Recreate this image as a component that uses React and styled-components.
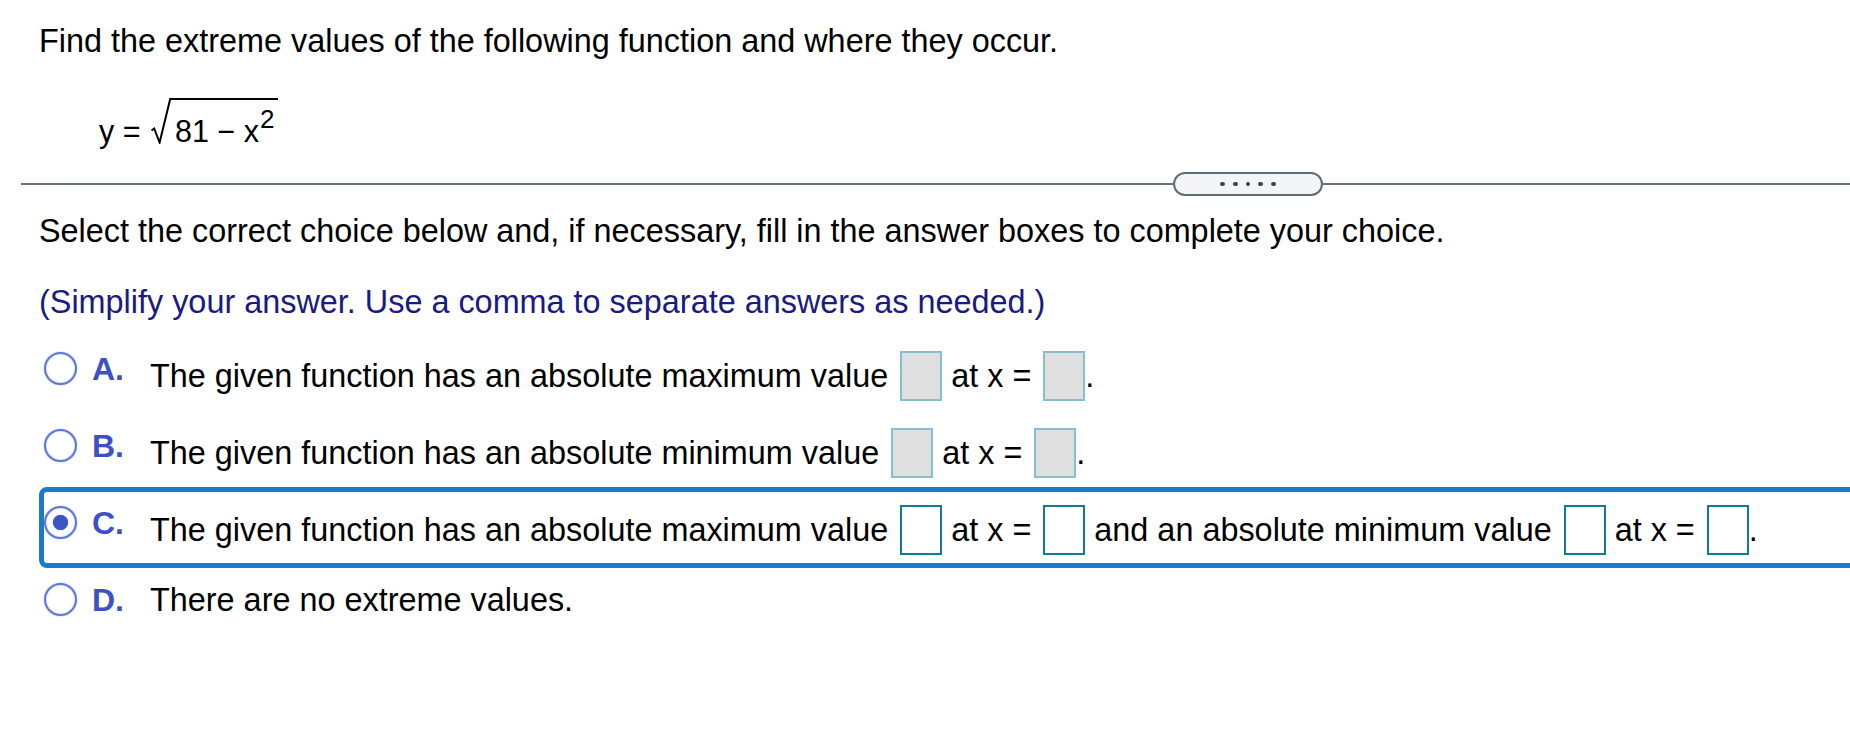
import React from 'react';
import styled, { createGlobalStyle } from 'styled-components';

const options = [
  {
    letter: 'A',
    parts: ['The given function has an absolute maximum value', 'box', 'at x =', 'box', '.'],
  },
  {
    letter: 'B',
    parts: ['The given function has an absolute minimum value', 'box', 'at x =', 'box', '.'],
  },
  {
    letter: 'C',
    selected: true,
    parts: [
      'The given function has an absolute maximum value', 'box', 'at x =', 'box',
      'and an absolute minimum value', 'box', 'at x =', 'box', '.',
    ],
  },
  {
    letter: 'D',
    parts: ['There are no extreme values.'],
  },
];

const renderParts = (parts, active) =>
  parts.map((part, i) => {
    if (part === 'box') return <AnswerBox key={i} $active={active} />;
    // a space goes before text that follows a box, except the closing period
    const lead = i > 0 && part !== '.' ? ' ' : '';
    const trail = parts[i + 1] === 'box' ? ' ' : '';
    return <React.Fragment key={i}>{lead + part + trail}</React.Fragment>;
  });

const App = () => {
  return (
    <>
      <GlobalStyle />
      <Page>
        <Prompt>Find the extreme values of the following function and where they occur.</Prompt>

        <Equation>
          y = <RadicalSign viewBox="0 0 22 46" width="22" height="46">
            <path d="M2.5 32.5 L5.2 30.5 L10.6 44.5 L21.2 1 L22 1" fill="none" stroke="#000" strokeWidth="2" strokeLinejoin="miter" />
          </RadicalSign>
          <Radicand>
            81 − x<Sup>2</Sup>
          </Radicand>
        </Equation>

        <Separator>
          <Rule $width="1152px" />
          <Pill>
            {[0, 1, 2, 3, 4].map(i => <PillDot key={i} />)}
          </Pill>
          <Rule />
        </Separator>

        <Instruction>
          Select the correct choice below and, if necessary, fill in the answer boxes to complete your choice.
        </Instruction>
        <Hint>(Simplify your answer. Use a comma to separate answers as needed.)</Hint>

        <Options>
          {options.map(opt => (
            <Option key={opt.letter} $selected={opt.selected}>
              <Radio>{opt.selected && <RadioDot />}</Radio>
              <Letter>{opt.letter}.</Letter>
              <Content>{renderParts(opt.parts, opt.selected)}</Content>
            </Option>
          ))}
        </Options>
      </Page>
    </>
  );
};

export default App;

const GlobalStyle = createGlobalStyle`
  html, body {
    margin: 0;
    padding: 0;
    background: #fff;
    overflow: hidden;
  }

  body {
    font-family: "Liberation Sans", Arial, sans-serif;
    color: #000;
  }
`;

const Page = styled.div`
  padding: 23px 0 0 39px;
  font-size: 32.4px;
  line-height: 36px;
`;

const Prompt = styled.p`
  margin: 0;
`;

const Equation = styled.div`
  margin: 39px 0 0 60px;
  font-size: 30.5px;
  line-height: normal;
  white-space: nowrap;
`;

const RadicalSign = styled.svg`
  display: inline-block;
  vertical-align: -2px;
`;

const Radicand = styled.span`
  display: inline-block;
  border-top: 2px solid #000;
  padding: 14px 4px 0 4px;
  line-height: normal;
`;

const Sup = styled.span`
  font-size: 26px;
  line-height: 0;
  vertical-align: 14px;
  margin-left: 1px;
`;

const Separator = styled.div`
  display: flex;
  align-items: center;
  margin: 23px 0 0 -18px;
  width: calc(100% + 18px);
  height: 24px;
`;

const Rule = styled.div`
  height: 2px;
  background: #66727f;
  flex: ${({ $width }) => ($width ? `0 0 ${$width}` : '1')};
`;

const Pill = styled.div`
  flex: none;
  box-sizing: border-box;
  width: 150px;
  height: 24px;
  border: 2px solid #5e6b79;
  border-radius: 12px;
  background: #f3f4f6;
  display: flex;
  align-items: center;
  justify-content: center;
  gap: 8.2px;
`;

const PillDot = styled.span`
  width: 4.5px;
  height: 4.5px;
  border-radius: 50%;
  background: #3f4449;
`;

const Instruction = styled.p`
  margin: 17px 0 0;
`;

const Hint = styled.p`
  margin: 35px 0 0;
  color: #1a1a82;
`;

const Options = styled.div`
  display: flex;
  flex-direction: column;
  gap: 6px;
  margin: 18px 0 0 5px;
`;

const Option = styled.div`
  display: flex;
  align-items: flex-start;
  width: 1880px;
  padding: 13px 0 8px;
  border-radius: 3px;
  outline: ${({ $selected }) => ($selected ? '5px solid #1a7cc9' : 'none')};
`;

const Radio = styled.span`
  flex: none;
  box-sizing: border-box;
  width: 33px;
  height: 33px;
  margin-top: 1px;
  border-radius: 50%;
  border: 2.5px solid #5f78d6;
  box-shadow: 0 0 1.5px rgba(95, 120, 214, 0.7), inset 0 0 1.5px rgba(95, 120, 214, 0.7);
  display: flex;
  align-items: center;
  justify-content: center;
`;

const RadioDot = styled.span`
  width: 15px;
  height: 15px;
  border-radius: 50%;
  background: #3b55c8;
  box-shadow: 0 0 1px #3b55c8;
`;

const Letter = styled.span`
  flex: none;
  width: 58px;
  margin-left: 15px;
  font-size: 32px;
  font-weight: bold;
  line-height: 36px;
  color: #3d51c4;
`;

const Content = styled.span`
  font-size: 32.4px;
  line-height: 36px;
  white-space: nowrap;
`;

const AnswerBox = styled.span`
  display: inline-block;
  box-sizing: border-box;
  width: 42px;
  height: 50px;
  margin-left: 3px;
  vertical-align: -14px;
  border: 2px solid ${({ $active }) => ($active ? '#147a98' : '#87bfcf')};
  background: ${({ $active }) => ($active ? '#fff' : '#dfdfdf')};
`;
